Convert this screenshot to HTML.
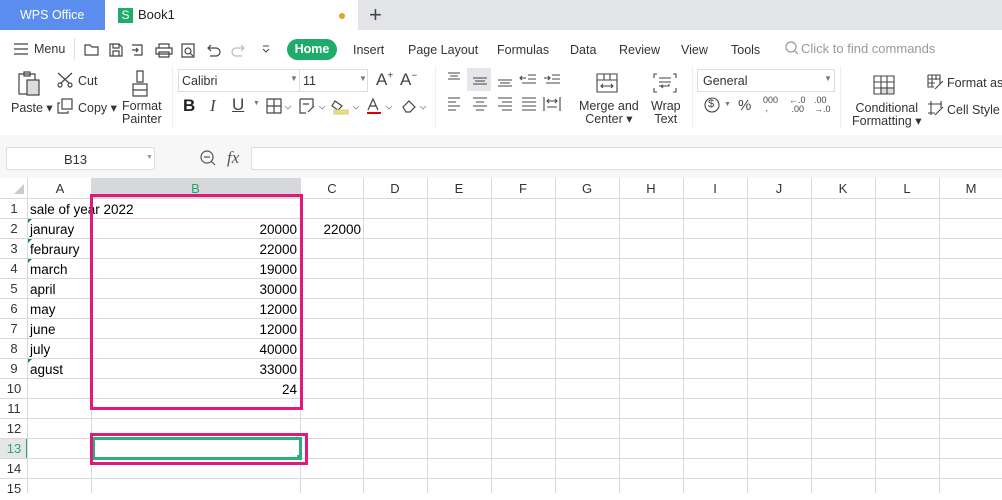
<!DOCTYPE html>
<html><head><meta charset="utf-8"><style>
*{margin:0;padding:0;box-sizing:border-box}
body{width:1002px;height:493px;overflow:hidden;background:#fff;font-family:"Liberation Sans",sans-serif;position:relative;font-size:12px;color:#333}
.a{position:absolute;white-space:nowrap}
.t{font-size:12.5px;color:#333}
.cell{position:absolute;font-family:"Liberation Sans",sans-serif;font-size:13.5px;color:#000;height:20px;line-height:22px}
.hl{position:absolute;left:0;width:1002px;height:1px;background:#d8d8e0}
.vl{position:absolute;top:178px;height:315px;width:1px;background:#d8d8e0}
.ch{position:absolute;top:178px;height:20px;line-height:22px;text-align:center;font-size:13px;color:#333;width:64px}
.rh{position:absolute;left:0;width:28px;text-align:center;font-size:13px;color:#333;height:20px;line-height:22px}
svg{position:absolute;overflow:visible}
</style></head><body>
<div class="a" style="left:0;top:0;width:1002px;height:30px;background:#e3e4e8"></div>
<div class="a" style="left:0;top:0;width:105px;height:30px;background:#5b8def;color:#fff;font-size:12.5px;line-height:30px;padding-left:20px">WPS Office</div>
<div class="a" style="left:105px;top:0;width:253px;height:30px;background:#fff"></div>
<div class="a" style="left:118px;top:8px;width:15px;height:15px;background:#1fab6a;color:#fff;font-size:12px;line-height:15px;text-align:center">S</div>
<div class="a" style="left:138px;top:7px;font-size:13px;color:#222">Book1</div>
<div class="a" style="left:339px;top:13px;width:6px;height:6px;border-radius:3px;background:#e8a11c"></div>
<div class="a" style="left:369px;top:2px;font-size:22px;color:#444">+</div>
<svg style="left:14px;top:43px" width="14" height="12"><path d="M0 1H14M0 6H14M0 11H14" stroke="#444" stroke-width="1.3"/></svg>
<div class="a t" style="left:34px;top:42px">Menu</div>
<div class="a" style="left:74px;top:38px;width:1px;height:22px;background:#e0e0e0"></div>
<svg style="left:84px;top:42px" width="180" height="16" fill="none" stroke="#444" stroke-width="1.2">
<path d="M1 3H6L8 5H14V13H1Z"/><path d="M26 2H35L38 5V14H26ZM29 2V6H35V2M29 14V9H35V14"/>
<path d="M48 3H58V13H50M48 8H54M52 6L54 8L52 10"/>
<path d="M75 6V2H85V6M72 6H88V12H72ZM75 10H85V15H75Z"/>
<path d="M98 2H110V15H98Z"/><circle cx="104" cy="9" r="3"/><path d="M106 11L109 14"/>
<path d="M127 3L124 6L127 9M124 6H132A4 4 0 0 1 132 14H126"/>
<path d="M157 3L160 6L157 9M160 6H152A4 4 0 0 0 152 14H158" stroke="#bbb"/>
<path d="M179 4H185M179 7L182 10L185 7" stroke-width="1"/>
</svg>
<div class="a" style="left:287px;top:39px;width:50px;height:21px;border-radius:11px;background:#1fab6a;color:#fff;font-weight:bold;font-size:12.5px;line-height:21px;text-align:center">Home</div>
<div class="a t" style="left:353px;top:43px">Insert</div>
<div class="a t" style="left:408px;top:43px">Page Layout</div>
<div class="a t" style="left:497px;top:43px">Formulas</div>
<div class="a t" style="left:570px;top:43px">Data</div>
<div class="a t" style="left:619px;top:43px">Review</div>
<div class="a t" style="left:681px;top:43px">View</div>
<div class="a t" style="left:731px;top:43px">Tools</div>
<svg style="left:785px;top:41px" width="14" height="14" fill="none" stroke="#999" stroke-width="1.2"><circle cx="6" cy="6" r="5"/><path d="M10 10L13 13"/></svg>
<div class="a" style="left:801px;top:41px;font-size:13px;color:#999">Click to find commands</div>
<svg style="left:18px;top:70px" width="24" height="26" fill="none" stroke="#444" stroke-width="1.2"><path d="M1 4H17V24H1ZM6 2H12V6H6Z"/><rect x="9" y="10" width="12" height="15" fill="#ddd"/></svg>
<div class="a t" style="left:11px;top:100px">Paste ▾</div>
<svg style="left:57px;top:72px" width="16" height="16" fill="none" stroke="#444" stroke-width="1.2"><circle cx="3" cy="13" r="2"/><circle cx="13" cy="13" r="2"/><path d="M1 1L12 11M15 1L4 11"/></svg>
<div class="a t" style="left:78px;top:74px">Cut</div>
<svg style="left:57px;top:98px" width="16" height="16" fill="none" stroke="#444" stroke-width="1.2"><rect x="5" y="1" width="10" height="10"/><path d="M3 5H1V15H11V13"/></svg>
<div class="a t" style="left:78px;top:100px">Copy ▾</div>
<svg style="left:131px;top:70px" width="20" height="28" fill="none" stroke="#444" stroke-width="1.2"><path d="M6 1H12V12H6ZM2 14H16V26H2ZM2 20H16"/></svg>
<div class="a t" style="left:122px;top:100px;text-align:center;line-height:13px">Format<br>Painter</div>
<div class="a" style="left:172px;top:66px;width:1px;height:62px;background:#eee"></div>
<div class="a" style="left:178px;top:69px;width:190px;height:23px;border:1px solid #ddd"></div>
<div class="a" style="left:299px;top:70px;width:1px;height:21px;background:#ddd"></div>
<div class="a t" style="left:182px;top:74px">Calibri</div>
<div class="a" style="left:290px;top:74px;font-size:8px;color:#777">▼</div>
<div class="a t" style="left:303px;top:74px">11</div>
<div class="a" style="left:359px;top:74px;font-size:8px;color:#777">▼</div>
<div class="a" style="left:376px;top:70px;font-size:17px;color:#444">A<sup style="font-size:10px">+</sup></div>
<div class="a" style="left:400px;top:70px;font-size:17px;color:#444">A<sup style="font-size:10px">−</sup></div>
<div class="a" style="left:183px;top:96px;font-size:17px;font-weight:bold;color:#222">B</div>
<div class="a" style="left:210px;top:96px;font-size:17px;font-style:italic;color:#444;font-family:'Liberation Serif',serif">I</div>
<div class="a" style="left:232px;top:95px;font-size:17px;color:#444;text-decoration:underline">U</div>
<div class="a" style="left:253px;top:100px;font-size:7px;color:#777">▼</div>
<svg style="left:266px;top:98px" width="160" height="18" fill="none" stroke="#444" stroke-width="1.2">
<path d="M1 1H15V15H1ZM8 1V15M1 8H15"/><path d="M19 8l3 3 3-3" stroke="#888" stroke-width="0.8"/>
<path d="M34 1H47V9M34 1V15H40M37 6H43M42 14L48 8"/><path d="M53 8l3 3 3-3" stroke="#888" stroke-width="0.8"/>
<path d="M69 3L76 8L72 12L66 8Z"/><rect x="68" y="12" width="14" height="4" fill="#f3e73a" stroke="#ccc"/><path d="M87 8l3 3 3-3" stroke="#888" stroke-width="0.8"/>
<path d="M102 12L107 1L112 12M104 8H110"/><rect x="101" y="14" width="14" height="2" fill="#d00" stroke="none"/><path d="M120 8l3 3 3-3" stroke="#888" stroke-width="0.8"/>
<path d="M137 9L143 3L149 9L144 14H140Z"/><path d="M154 8l3 3 3-3" stroke="#888" stroke-width="0.8"/>
</svg>
<div class="a" style="left:435px;top:66px;width:1px;height:62px;background:#eee"></div>
<div class="a" style="left:467px;top:68px;width:24px;height:23px;background:#e5e6ea"></div>
<svg style="left:446px;top:72px" width="120" height="42" fill="none" stroke="#444" stroke-width="1.1">
<path d="M2 1H14M4 4H12M2 7H14"/><path d="M27 6H41M29 9H39M27 12H41"/><path d="M52 8H66M54 11H64M52 14H66"/>
<path d="M76 4L74 6L76 8M74 6H80M82 3H90M82 7H90M76 11H90"/><path d="M102 4L104 6L102 8M98 6H104M106 3H114M106 7H114M100 11H114"/>
<path d="M2 26H14M2 30H10M2 34H14M2 38H10"/><path d="M27 26H41M30 30H38M27 34H41M30 38H38"/><path d="M52 26H66M56 30H66M52 34H66M56 38H66"/>
<path d="M76 26H90M76 30H90M76 34H90M76 38H90"/><path d="M98 25V39M114 25V39M101 29H111M103 27L101 29L103 31M109 27L111 29L109 31M101 35H111"/>
</svg>
<svg style="left:596px;top:73px" width="22" height="20" fill="none" stroke="#444" stroke-width="1.1"><path d="M1 1H21V19H1ZM1 7H21M8 1V7M14 1V7M5 13H17M7 11L5 13L7 15M15 11L17 13L15 15"/></svg>
<div class="a t" style="left:579px;top:100px;text-align:center;line-height:13px">Merge and<br>Center ▾</div>
<svg style="left:653px;top:73px" width="24" height="20" fill="none" stroke="#444" stroke-width="1.1"><path d="M4 1H1V5M20 1H23V5M4 19H1V15M20 19H23V15M6 5H18M6 9H18M6 13H16V11M10 12L8 13L10 15"/></svg>
<div class="a t" style="left:651px;top:100px;text-align:center;line-height:13px">Wrap<br>Text</div>
<div class="a" style="left:692px;top:66px;width:1px;height:62px;background:#eee"></div>
<div class="a" style="left:697px;top:69px;width:138px;height:23px;border:1px solid #ddd"></div>
<div class="a t" style="left:703px;top:74px">General</div>
<div class="a" style="left:824px;top:74px;font-size:8px;color:#777">▼</div>
<svg style="left:704px;top:97px" width="16" height="16" fill="none" stroke="#444" stroke-width="1.1"><circle cx="8" cy="8" r="7"/></svg>
<div class="a" style="left:708px;top:98px;font-size:11px;color:#444">$</div>
<div class="a" style="left:724px;top:101px;font-size:7px;color:#777">▼</div>
<div class="a" style="left:738px;top:97px;font-size:15px;color:#444">%</div>
<div class="a" style="left:763px;top:96px;font-size:9px;color:#444;line-height:8px">000<br>&nbsp;,</div>
<div class="a" style="left:789px;top:96px;font-size:9px;color:#444;line-height:9px">←.0<br>&nbsp;.00</div>
<div class="a" style="left:814px;top:96px;font-size:9px;color:#444;line-height:9px">.00<br>→.0</div>
<div class="a" style="left:840px;top:66px;width:1px;height:62px;background:#eee"></div>
<svg style="left:873px;top:75px" width="22" height="20" fill="none" stroke="#444" stroke-width="1.1"><rect x="7" y="12" width="14" height="7" fill="#ddd" stroke="none"/><path d="M1 1H21V19H1ZM1 7H21M1 13H21M8 1V19M14 1V19"/></svg>
<div class="a t" style="left:852px;top:102px;text-align:center;line-height:13px">Conditional<br>Formatting ▾</div>
<svg style="left:927px;top:74px" width="18" height="16" fill="none" stroke="#444" stroke-width="1.1"><path d="M1 1H13V10M1 1V13H7M1 5H13M1 9H8M5 1V13M9 1V6M8 15L16 7"/></svg>
<div class="a t" style="left:947px;top:76px">Format as T</div>
<svg style="left:927px;top:100px" width="18" height="16" fill="none" stroke="#444" stroke-width="1.1"><path d="M4 1V15M1 4H15M14 1V8M1 13H8M8 15L16 7"/></svg>
<div class="a t" style="left:947px;top:102px">Cell Style ▾</div>
<div class="a" style="left:0;top:135px;width:1002px;height:43px;background:#f7f7f7"></div>
<div class="a" style="left:6px;top:147px;width:149px;height:23px;border:1px solid #ddd;background:#fff;border-radius:2px"></div>
<div class="a t" style="left:64px;top:152px;font-size:13px">B13</div>
<div class="a" style="left:146px;top:154px;font-size:7px;color:#999">▼</div>
<svg style="left:200px;top:150px" width="16" height="16" fill="none" stroke="#555" stroke-width="1.2"><circle cx="7" cy="7" r="6"/><path d="M11 11L15 15M4 7H10"/></svg>
<div class="a" style="left:227px;top:148px;font-size:17px;font-style:italic;color:#555;font-family:'Liberation Serif',serif">fx</div>
<div class="a" style="left:251px;top:147px;width:760px;height:23px;border:1px solid #ddd;background:#fff;border-radius:2px"></div>
<div class="a" style="left:0;top:178px;width:1002px;height:20px;background:#fff"></div>
<div class="a" style="left:91px;top:178px;width:209px;height:20px;background:#d7d8dc"></div>
<div class="a" style="left:0;top:438px;width:28px;height:20px;background:#e6e6e8;border-right:2px solid #1fab6a"></div>
<svg style="left:14px;top:184px" width="10" height="10"><path d="M10 0V10H0Z" fill="#ccc"/></svg>
<div class="hl" style="top:198px"></div><div class="hl" style="top:218px"></div><div class="hl" style="top:238px"></div><div class="hl" style="top:258px"></div><div class="hl" style="top:278px"></div><div class="hl" style="top:298px"></div><div class="hl" style="top:318px"></div><div class="hl" style="top:338px"></div><div class="hl" style="top:358px"></div><div class="hl" style="top:378px"></div><div class="hl" style="top:398px"></div><div class="hl" style="top:418px"></div><div class="hl" style="top:438px"></div><div class="hl" style="top:458px"></div><div class="hl" style="top:478px"></div>
<div class="vl" style="left:27px"></div><div class="vl" style="left:91px"></div><div class="vl" style="left:300px"></div><div class="vl" style="left:363px"></div><div class="vl" style="left:427px"></div><div class="vl" style="left:491px"></div><div class="vl" style="left:555px"></div><div class="vl" style="left:619px"></div><div class="vl" style="left:683px"></div><div class="vl" style="left:747px"></div><div class="vl" style="left:811px"></div><div class="vl" style="left:875px"></div><div class="vl" style="left:939px"></div>
<div class="ch" style="left:28px">A</div><div class="ch" style="left:91px;width:209px;color:#1fab6a">B</div><div class="ch" style="left:300px">C</div><div class="ch" style="left:363px">D</div><div class="ch" style="left:427px">E</div><div class="ch" style="left:491px">F</div><div class="ch" style="left:555px">G</div><div class="ch" style="left:619px">H</div><div class="ch" style="left:683px">I</div><div class="ch" style="left:747px">J</div><div class="ch" style="left:811px">K</div><div class="ch" style="left:875px">L</div><div class="ch" style="left:939px">M</div>
<div class="rh" style="top:198px">1</div><div class="rh" style="top:218px">2</div><div class="rh" style="top:238px">3</div><div class="rh" style="top:258px">4</div><div class="rh" style="top:278px">5</div><div class="rh" style="top:298px">6</div><div class="rh" style="top:318px">7</div><div class="rh" style="top:338px">8</div><div class="rh" style="top:358px">9</div><div class="rh" style="top:378px">10</div><div class="rh" style="top:398px">11</div><div class="rh" style="top:418px">12</div><div class="rh" style="top:438px;color:#1fab6a">13</div><div class="rh" style="top:458px">14</div><div class="rh" style="top:478px">15</div>
<div class="cell" style="left:30px;top:199px">sale of year 2022</div>
<div class="cell" style="left:30px;top:219px">januray</div>
<div class="cell" style="left:30px;top:239px">febraury</div>
<div class="cell" style="left:30px;top:259px">march</div>
<div class="cell" style="left:30px;top:279px">april</div>
<div class="cell" style="left:30px;top:299px">may</div>
<div class="cell" style="left:30px;top:319px">june</div>
<div class="cell" style="left:30px;top:339px">july</div>
<div class="cell" style="left:30px;top:359px">agust</div>
<svg style="left:28px;top:219px" width="5" height="160"><path d="M0 0H4L0 4ZM0 20H4L0 24ZM0 40H4L0 44ZM0 140H4L0 144Z" fill="#1a8f3a"/></svg>
<div class="cell" style="left:200px;width:97px;text-align:right;top:219px">20000</div>
<div class="cell" style="left:200px;width:97px;text-align:right;top:239px">22000</div>
<div class="cell" style="left:200px;width:97px;text-align:right;top:259px">19000</div>
<div class="cell" style="left:200px;width:97px;text-align:right;top:279px">30000</div>
<div class="cell" style="left:200px;width:97px;text-align:right;top:299px">12000</div>
<div class="cell" style="left:200px;width:97px;text-align:right;top:319px">12000</div>
<div class="cell" style="left:200px;width:97px;text-align:right;top:339px">40000</div>
<div class="cell" style="left:200px;width:97px;text-align:right;top:359px">33000</div>
<div class="cell" style="left:200px;width:97px;text-align:right;top:379px">24</div>
<div class="cell" style="left:300px;width:61px;text-align:right;top:219px">22000</div>
<div class="a" style="left:92px;top:437px;width:210px;height:23px;border:3px solid #2bb07a"></div>
<div class="a" style="left:297px;top:455px;width:5px;height:5px;background:#2bb07a"></div>
<div class="a" style="left:90px;top:194px;width:213px;height:216px;border:3px solid #e0197a"></div>
<div class="a" style="left:90px;top:433px;width:218px;height:32px;border:3px solid #e0197a"></div>
</body></html>
